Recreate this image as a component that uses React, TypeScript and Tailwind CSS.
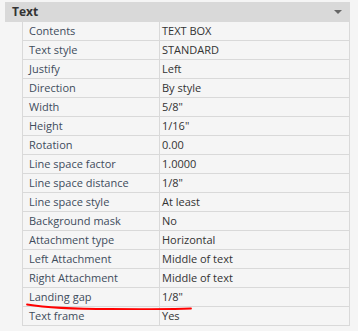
import React from "react";

const rows: [string, string][] = [
  ["Contents", "TEXT BOX"],
  ["Text style", "STANDARD"],
  ["Justify", "Left"],
  ["Direction", "By style"],
  ["Width", '5/8"'],
  ["Height", '1/16"'],
  ["Rotation", "0.00"],
  ["Line space factor", "1.0000"],
  ["Line space distance", '1/8"'],
  ["Line space style", "At least"],
  ["Background mask", "No"],
  ["Attachment type", "Horizontal"],
  ["Left Attachment", "Middle of text"],
  ["Right Attachment", "Middle of text"],
  ["Landing gap", '1/8"'],
  ["Text frame", "Yes"],
];

export default function App() {
  return (
    <div
      className="relative w-[358px] h-[331px] bg-[#f5f5f5] pt-[2px] pl-[5px] overflow-hidden"
      style={{ fontFamily: '"Open Sans", "Noto Sans", sans-serif' }}
    >
      <div className="flex items-center justify-between w-[345px] h-[20px] bg-[#d9d9d9] pl-[7px] pr-[8px]">
        <span className="text-[12px] font-bold text-[#333333] leading-none">Text</span>
        <span className="w-0 h-0 border-l-[4px] border-r-[4px] border-t-[4px] border-l-transparent border-r-transparent border-t-[#666666]" />
      </div>
      <div className="flex">
        <div className="w-[17px] shrink-0" />
        <div className="w-[328px] border-l border-r border-[#d9d9d9]">
          {rows.map(([label, value]) => (
            <div key={label} className="flex h-[19px] border-b border-[#d9d9d9]">
              <div className="w-[137px] shrink-0 border-r border-[#d9d9d9] pl-[6px] text-[11px] leading-[18px] text-[#3e4c5c]">
                {label}
              </div>
              <div className="pl-[2px] text-[11px] leading-[18px] text-[#333333]">{value}</div>
            </div>
          ))}
        </div>
      </div>
      <svg className="absolute left-0 top-0 pointer-events-none" width="358" height="331">
        <path
          d="M27 304.5 C 45 307.5, 70 309, 110 309 S 170 309.5, 191 308.5"
          fill="none"
          stroke="#ff0000"
          strokeWidth="1.8"
          strokeLinecap="round"
        />
      </svg>
    </div>
  );
}
